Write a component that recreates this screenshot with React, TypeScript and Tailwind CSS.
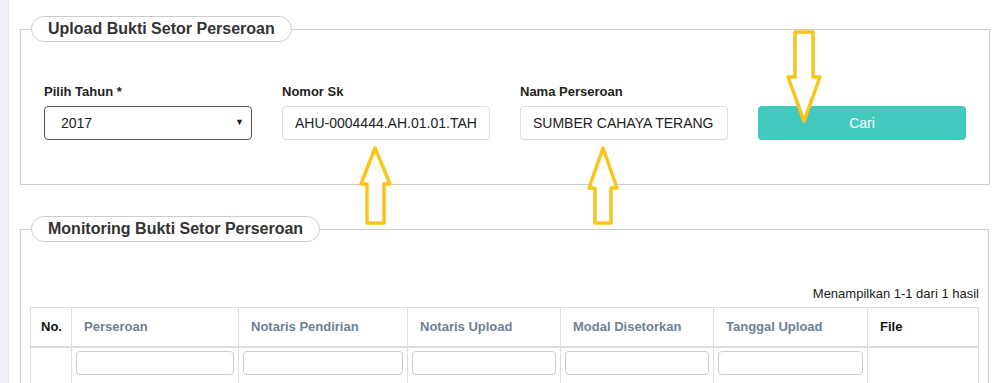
import React from "react";

const font = { fontFamily: '"Liberation Sans", Arial, sans-serif' };

function Legend({ children }: { children: React.ReactNode }) {
  return (
    <legend className="ml-[10px] h-[26px] rounded-full border border-[#cccccc] bg-white px-[16px] text-[16px] font-bold leading-[24px] text-[#333333]">
      {children}
    </legend>
  );
}

const cols = [
  { label: "No.", w: 41, muted: false, input: false, pad: "px-[10px]" },
  { label: "Perseroan", w: 167, muted: true, input: true, pad: "px-[12px]" },
  { label: "Notaris Pendirian", w: 169, muted: true, input: true, pad: "px-[12px]" },
  { label: "Notaris Upload", w: 153, muted: true, input: true, pad: "px-[12px]" },
  { label: "Modal Disetorkan", w: 153, muted: true, input: true, pad: "px-[12px]" },
  { label: "Tanggal Upload", w: 154, muted: true, input: true, pad: "px-[12px]" },
  { label: "File", w: 111, muted: false, input: false, pad: "px-[12px]" },
];

export default function App() {
  return (
    <div className="relative flex h-[383px] w-[1000px] overflow-hidden bg-white text-[#333333]" style={font}>
      <div className="w-[9px] shrink-0 border-r border-[#e2e5ee] bg-[#eff1f7]" />
      <div className="flex w-[968px] flex-col pl-[11px] pt-[16px]">
        <fieldset className="m-0 w-[968px] border border-[#cccccc] p-0">
          <Legend>Upload Bukti Setor Perseroan</Legend>
          <div className="grid grid-cols-[208px_208px_208px_208px] gap-x-[30px] px-[23px] pb-[44px] pt-[42px]">
            <div className="flex flex-col">
              <label className="mb-[7px] text-[13px] font-bold leading-[15px] text-[#222]">Pilih Tahun *</label>
              <div className="flex h-[34px] items-center justify-between rounded-[4px] border border-[#555c66] pl-[16px] pr-[7px] text-[14px] text-[#222]">
                <span>2017</span>
                <span className="text-[9px]">▼</span>
              </div>
            </div>
            <div className="flex flex-col">
              <label className="mb-[7px] text-[13px] font-bold leading-[15px] text-[#222]">Nomor Sk</label>
              <div className="flex h-[34px] items-center overflow-hidden whitespace-nowrap rounded-[4px] border border-[#dddddd] pl-[12px] text-[14px] text-[#222]">
                AHU-0004444.AH.01.01.TAH
              </div>
            </div>
            <div className="flex flex-col">
              <label className="mb-[7px] text-[13px] font-bold leading-[15px] text-[#222]">Nama Perseroan</label>
              <div className="flex h-[34px] items-center overflow-hidden whitespace-nowrap rounded-[4px] border border-[#dddddd] pl-[12px] text-[14px] text-[#222]">
                SUMBER CAHAYA TERANG
              </div>
            </div>
            <div className="flex flex-col justify-end">
              <button className="h-[34px] rounded-[4px] bg-[#42cabe] text-[14px] text-white">Cari</button>
            </div>
          </div>
        </fieldset>

        <fieldset className="m-0 mt-[31px] w-[968px] border border-[#cccccc] p-0">
          <Legend>Monitoring Bukti Setor Perseroan</Legend>
          <div className="px-[9px] pt-[44px]">
            <div className="text-right text-[13px] leading-[16px] text-[#222]">Menampilkan 1-1 dari 1 hasil</div>
            <table className="mt-[5px] w-[948px] table-fixed border-collapse">
              <colgroup>
                {cols.map((c) => (
                  <col key={c.label} style={{ width: c.w }} />
                ))}
              </colgroup>
              <thead>
                <tr className="h-[39px]">
                  {cols.map((c) => (
                    <th
                      key={c.label}
                      className={`border border-b-2 border-[#dddddd] ${c.pad} text-left text-[13px] font-bold ${
                        c.muted ? "text-[#6e8198]" : "text-[#111]"
                      }`}
                    >
                      {c.label}
                    </th>
                  ))}
                </tr>
              </thead>
              <tbody>
                <tr className="h-[42px]">
                  {cols.map((c) => (
                    <td key={c.label} className="border border-[#dddddd] px-[4px] py-[3px] align-top">
                      {c.input ? <div className="h-[24px] rounded-[4px] border border-[#cccccc]" /> : null}
                    </td>
                  ))}
                </tr>
              </tbody>
            </table>
          </div>
        </fieldset>
      </div>

      <svg className="pointer-events-none absolute left-0 top-0" width="1000" height="383" viewBox="0 0 1000 383">
        <g fill="#ffffff" stroke="#fcc419" strokeWidth="3.5" strokeLinejoin="round">
          <polygon points="375,148 390,184 384,184 384,223 367,223 367,184 361,184" />
          <polygon points="603,148 617,188 611,188 611,223 595,223 595,188 589,188" />
          <polygon points="795,32 813,32 813,77 820,77 804,121 788,77 795,77" />
        </g>
      </svg>
    </div>
  );
}
